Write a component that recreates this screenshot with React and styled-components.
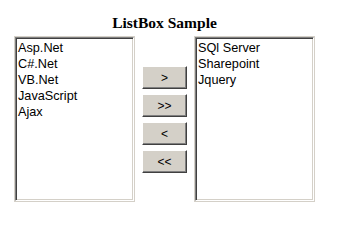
import React from 'react'
import styled, { createGlobalStyle } from 'styled-components';

const GlobalStyle = createGlobalStyle`
  html, body {
    margin: 0;
    padding: 0;
    background: #fff;
  }
`;

const Page = styled.div`
  padding: 14px 0 0 14px;
  width: 301px;
`;

const Title = styled.h3`
  margin: 0 0 4px;
  height: 18px;
  font-family: "Liberation Serif", "Times New Roman", serif;
  font-size: 15.5px;
  line-height: 18px;
  font-weight: bold;
  text-align: center;
  color: #000;
`;

const Row = styled.div`
  display: flex;
  align-items: stretch;
`;

const ListFrame = styled.div`
  width: 121px;
  height: 166px;
  box-sizing: border-box;
  border: 1px solid #d4d0c8;
`;

const ListBox = styled.div`
  height: 100%;
  box-sizing: border-box;
  border-top: 1px solid #808080;
  border-left: 1px solid #808080;
  border-right: 1px solid #fff;
  border-bottom: 1px solid #fff;
  box-shadow: inset 1px 1px #404040, inset -1px -1px #d4d0c8;
  padding: 2px 2px;
  background: #fff;
`;

const Item = styled.div`
  font-family: "Liberation Sans", Arial, sans-serif;
  font-size: 12.7px;
  line-height: 16px;
  color: #000;
  white-space: nowrap;
`;

const Controls = styled.div`
  width: 59px;
  display: flex;
  flex-direction: column;
  align-items: center;
  justify-content: center;
  gap: 5px;
  padding-top: 1px;
`;

const MoveButton = styled.button`
  width: 45px;
  height: 23px;
  margin: 0;
  padding: 0;
  box-sizing: border-box;
  background: #d4d0c8;
  border-top: 1px solid #fff;
  border-left: 1px solid #fff;
  border-right: 1px solid #404040;
  border-bottom: 1px solid #404040;
  box-shadow: inset -1px -1px #808080;
  font-family: "Liberation Sans", Arial, sans-serif;
  font-size: 12px;
  color: #000;
  cursor: pointer;
`;

const leftItems = ['Asp.Net', 'C#.Net', 'VB.Net', 'JavaScript', 'Ajax'];
const rightItems = ['SQl Server', 'Sharepoint', 'Jquery'];

function App() {
    return (
        <Page>
            <GlobalStyle />
            <Title>ListBox Sample</Title>
            <Row>
                <ListFrame>
                    <ListBox>
                        {leftItems.map((item) => <Item key={item}>{item}</Item>)}
                    </ListBox>
                </ListFrame>
                <Controls>
                    <MoveButton>&gt;</MoveButton>
                    <MoveButton>&gt;&gt;</MoveButton>
                    <MoveButton>&lt;</MoveButton>
                    <MoveButton>&lt;&lt;</MoveButton>
                </Controls>
                <ListFrame>
                    <ListBox>
                        {rightItems.map((item) => <Item key={item}>{item}</Item>)}
                    </ListBox>
                </ListFrame>
            </Row>
        </Page>
    )
}

export default App
